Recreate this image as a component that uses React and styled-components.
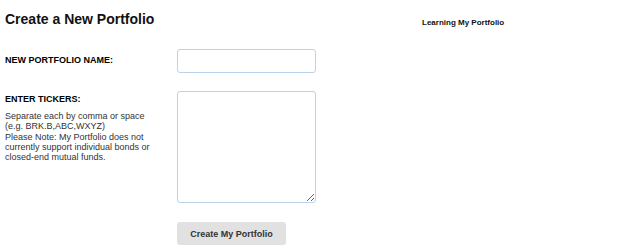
import React from 'react'
import styled, { createGlobalStyle } from 'styled-components';

const GlobalStyle = createGlobalStyle`
  body {
    margin: 0;
    background: #ffffff;
    font-family: "Liberation Sans", Arial, sans-serif;
    color: #000;
  }
`;

const Page = styled.div`
  display: flex;
  align-items: flex-start;
  padding-left: 5px;
`;

const Main = styled.div`
  width: 417px;
  display: flex;
  flex-direction: column;
`;

const Side = styled.div`
  padding-top: 18px;
`;

const SideTitle = styled.div`
  font-size: 8px;
  font-weight: 700;
  line-height: 9px;
  color: #111;
`;

const Title = styled.h1`
  margin: 11px 0 0;
  font-size: 14px;
  line-height: 16px;
  font-weight: 700;
  color: #111;
`;

const Form = styled.form`
  display: grid;
  grid-template-columns: 172px 139px;
  row-gap: 18px;
  margin-top: 22px;
`;

const Label = styled.label`
  display: block;
  font-size: 9px;
  font-weight: 700;
  line-height: 10px;
  padding-top: ${({ $top }) => $top}px;
`;

const Hint = styled.div`
  margin-top: 7px;
  font-size: 9px;
  line-height: 10.3px;
  color: #333;
`;

const Input = styled.input`
  box-sizing: border-box;
  width: 139px;
  height: 24px;
  border: 1px solid #b9d3ea;
  border-radius: 3px;
  outline: none;
  margin: 0;
`;

const TextArea = styled.textarea`
  box-sizing: border-box;
  width: 139px;
  height: 112px;
  border: 1px solid #b9d3ea;
  border-radius: 3px;
  outline: none;
  margin: 0;
  display: block;
`;

const Button = styled.button`
  grid-column: 2;
  width: 109px;
  height: 23px;
  margin-top: 1px;
  border: none;
  border-radius: 3px;
  background: #e1e1e1;
  color: #333;
  font-family: "Liberation Sans", Arial, sans-serif;
  font-size: 9px;
  font-weight: 700;
  padding: 0;
`;

export default function App() {
  return (
    <Page>
      <GlobalStyle />
      <Main>
        <Title>Create a New Portfolio</Title>
        <Form onSubmit={(e) => e.preventDefault()}>
          <Label $top={6}>NEW PORTFOLIO NAME:</Label>
          <Input type="text" />
          <div>
            <Label $top={3}>ENTER TICKERS:</Label>
            <Hint>
              Separate each by comma or space
              <br />
              (e.g. BRK.B,ABC,WXYZ)
              <br />
              Please Note: My Portfolio does not currently support individual bonds or closed-end mutual funds.
            </Hint>
          </div>
          <TextArea />
          <Button type="submit">Create My Portfolio</Button>
        </Form>
      </Main>
      <Side>
        <SideTitle>Learning My Portfolio</SideTitle>
      </Side>
    </Page>
  )
}
